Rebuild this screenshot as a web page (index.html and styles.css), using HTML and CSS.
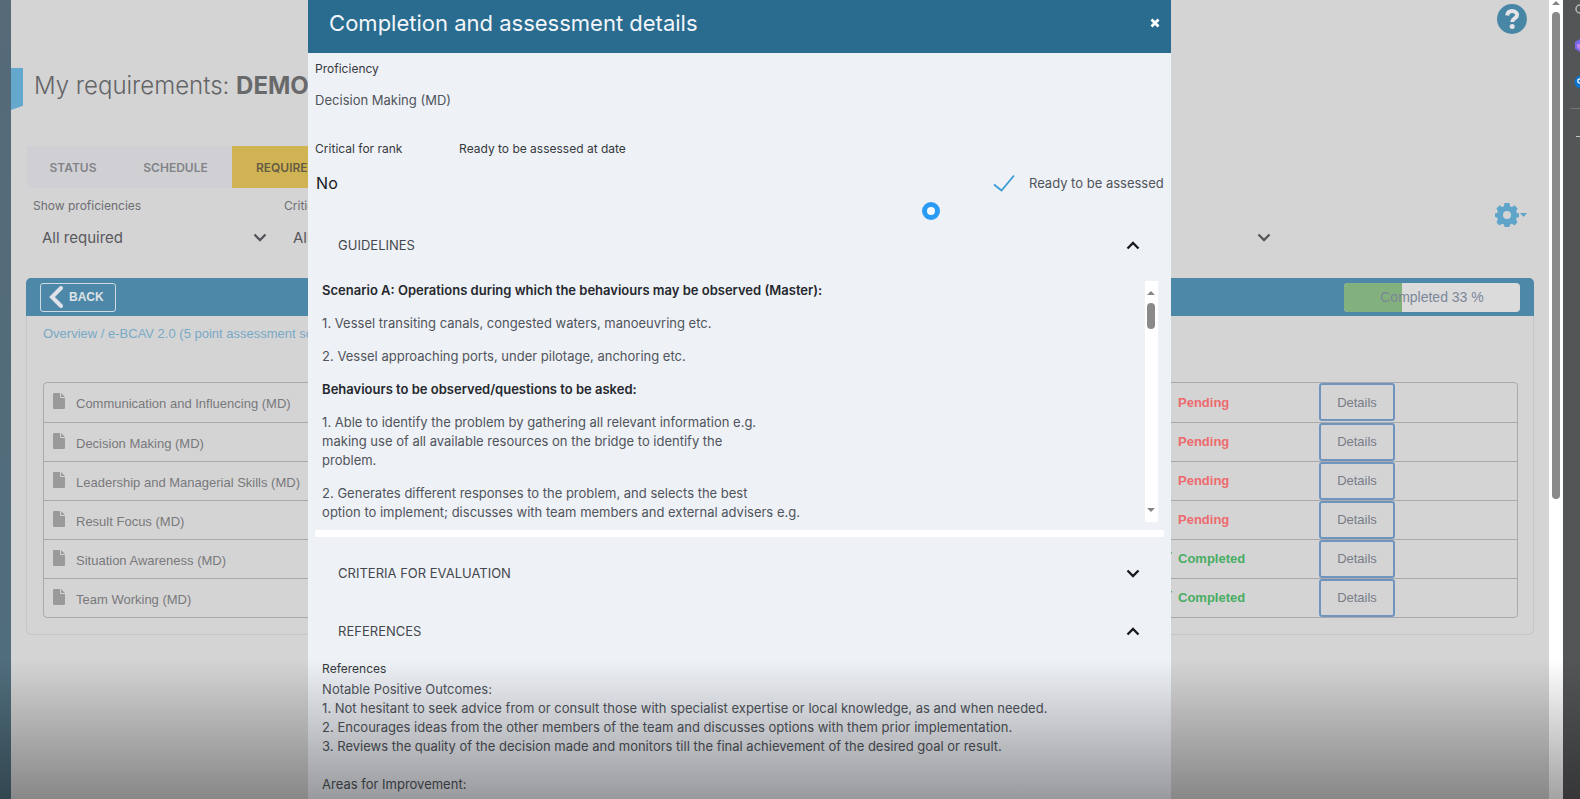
FILE: index.html
```html
<!DOCTYPE html>
<html lang="en">
<head>
<meta charset="utf-8">
<title>My requirements</title>
<link rel="stylesheet" href="styles.css">
</head>
<body>
<svg class="defs" aria-hidden="true">
  <symbol id="down" viewBox="0 0 14 9"><path d="M1.500 1.500L7 7l5.500-5.500" fill="none" stroke="currentColor" stroke-width="2.300"/></symbol>
  <symbol id="file" viewBox="0 0 12 16"><path d="M0 1q0-1 1-1h6v4.200q0 .8.800.8H12v10q0 1-1 1H1q-1 0-1-1zM8 0l4 4H8z" fill="currentColor"/></symbol>
  <symbol id="tick" viewBox="0 0 14 12"><path d="M1 7l4 4L13 1" fill="none" stroke="currentColor" stroke-width="2"/></symbol>
</svg>
<div class="app">
  <div class="rail"></div>
  <main class="page">
    <div class="title-row">
      <span class="flag"></span>
      <h1>My requirements: <b>DEMO</b></h1>
      <button class="help" aria-label="Help"><svg viewBox="0 0 30 30"><circle cx="15" cy="15" r="15" fill="#4787a5"/><path d="M10.200 11.500C10.600 8.300 12.500 7 15 7c2.800 0 5 1.600 5 4.200 0 3.300-4.800 3.300-4.800 6.800" fill="none" stroke="#e4e4e6" stroke-width="4"/><circle cx="15.200" cy="22.600" r="2.500" fill="#e4e4e6"/></svg></button>
    </div>
    <nav class="tabs">
      <button>STATUS</button><button>SCHEDULE</button><button class="active">REQUIREMENTS</button>
    </nav>
    <div class="filters">
      <div class="field"><label for="f1">Show proficiencies</label><div class="pick"><select id="f1"><option>All required</option></select><svg><use href="#down"/></svg></div></div>
      <div class="field"><label for="f2">Critical for rank</label><div class="pick"><select id="f2"><option>All</option></select><svg><use href="#down"/></svg></div></div>
      <div class="field"><label for="f3">Ready</label><div class="pick"><select id="f3"><option>All</option></select><svg><use href="#down"/></svg></div></div>
      <div class="field"><label for="f4">Status</label><div class="pick"><select id="f4"><option>All</option></select><svg><use href="#down"/></svg></div></div>
      <div class="field"><label for="f5">Type</label><div class="pick"><select id="f5"><option>All</option></select><svg><use href="#down"/></svg></div></div>
      <button class="gear" aria-label="Settings"><svg viewBox="0 0 32 24"><g fill="#5fa5ca"><path fill-rule="evenodd" d="M9.500 0h5l.6 3.200 1.800.8 2.700-1.800 3 3.200-1.400 2.800.7 1.700L24 10.400v3.600l-2.300.8-.7 1.800 1.500 2.600-3 3.200-2.700-1.700-1.700.7L14.500 24h-5l-.6-2.600-1.800-.7-2.700 1.700-3-3.200L2.900 16.600l-.7-1.800L0 14v-3.600l2.200-.5.7-1.700L1.400 5.400l3-3.200L7.100 4l1.800-.8zM12 8a4 4 0 100 8 4 4 0 000-8z"/><path d="M25 10h7l-3.500 4z"/></g></svg></button>
    </div>
    <section class="panel">
      <header class="bar">
        <button class="back"><svg viewBox="0 0 14 22"><path d="M12 2L3 11l9 9" fill="none" stroke="currentColor" stroke-width="4" stroke-linecap="round"/></svg>BACK</button>
        <div class="progress"><span class="fill" style="width:33%"></span><span class="value">Completed 33 %</span></div>
      </header>
      <div class="panel-body">
        <a class="crumb" href="#">Overview / e-BCAV 2.0 (5 point assessment scale)</a>
        <div class="frame"><table>
          <tr><td><svg class="file"><use href="#file"/></svg>Communication and Influencing (MD)</td><td class="status pending"><i></i>Pending</td><td class="act"><button>Details</button></td><td class="end"></td></tr>
          <tr><td><svg class="file"><use href="#file"/></svg>Decision Making (MD)</td><td class="status pending"><i></i>Pending</td><td class="act"><button>Details</button></td><td class="end"></td></tr>
          <tr><td><svg class="file"><use href="#file"/></svg>Leadership and Managerial Skills (MD)</td><td class="status pending"><i></i>Pending</td><td class="act"><button>Details</button></td><td class="end"></td></tr>
          <tr><td><svg class="file"><use href="#file"/></svg>Result Focus (MD)</td><td class="status pending"><i></i>Pending</td><td class="act"><button>Details</button></td><td class="end"></td></tr>
          <tr><td><svg class="file"><use href="#file"/></svg>Situation Awareness (MD)</td><td class="status done"><i><svg><use href="#tick"/></svg></i>Completed</td><td class="act"><button>Details</button></td><td class="end"></td></tr>
          <tr><td><svg class="file"><use href="#file"/></svg>Team Working (MD)</td><td class="status done"><i><svg><use href="#tick"/></svg></i>Completed</td><td class="act"><button>Details</button></td><td class="end"></td></tr>
        </table></div>
      </div>
    </section>
  </main>
  <div class="scroll"><span class="up"></span><span class="thumb"></span></div>
  <aside class="side">
    <svg viewBox="0 0 17 150"><circle cx="17" cy="9" r="4" fill="none" stroke="#b9babc" stroke-width="1.500"/><path d="M17 39l-5 3v7l5 3z" fill="#7968e8"/><path d="M17 44h-3v3l3 3z" fill="#c084ee"/><circle cx="18" cy="82" r="6.500" fill="#0a74d0"/><circle cx="17" cy="81" r="2.200" fill="none" stroke="#fff" stroke-width="1.200"/><path d="M7 108.500h10" stroke="#747577"/><path d="M13 136.500h4" stroke="#c6c7c9"/></svg>
  </aside>
</div>

<div class="dialog" role="dialog" aria-labelledby="dlg">
  <header class="dialog-head">
    <h2 id="dlg">Completion and assessment details</h2>
    <button class="close" aria-label="Close"><svg viewBox="0 0 10 10"><path d="M1.500 1.500l7 7m0-7l-7 7" stroke="#fff" stroke-width="2.800"/></svg></button>
  </header>
  <div class="dialog-body">
    <div class="label">Proficiency</div>
    <div class="prof">Decision Making (MD)</div>
    <div class="facts">
      <div class="fact"><div class="label">Critical for rank</div><div class="no">No</div></div>
      <div class="label">Ready to be assessed at date</div>
      <label class="ready"><input type="checkbox" checked><svg viewBox="0 0 22 18"><path d="M1 10.500l7.500 6L21 1.500" fill="none" stroke="#3b9bd6" stroke-width="1.800"/></svg><span>Ready to be assessed</span></label>
    </div>
    <button class="acc">GUIDELINES<svg class="flip"><use href="#down"/></svg></button>
    <div class="guide">
      <div class="guide-text">
        <p><b>Scenario A: Operations during which the behaviours may be observed (Master):</b></p>
        <p>1. Vessel transiting canals, congested waters, manoeuvring etc.</p>
        <p>2. Vessel approaching ports, under pilotage, anchoring etc.</p>
        <p><b>Behaviours to be observed/questions to be asked:</b></p>
        <p>1. Able to identify the problem by gathering all relevant information e.g.<br>making use of all available resources on the bridge to identify the<br>problem.</p>
        <p>2. Generates different responses to the problem, and selects the best<br>option to implement; discusses with team members and external advisers e.g.</p>
      </div>
      <div class="scroll small"><span class="up"></span><span class="thumb"></span><span class="down"></span></div>
    </div>
    <hr>
    <button class="acc">CRITERIA FOR EVALUATION<svg><use href="#down"/></svg></button>
    <button class="acc">REFERENCES<svg class="flip"><use href="#down"/></svg></button>
    <div class="refs">
      <div class="label">References</div>
      <p>Notable Positive Outcomes:<br>1. Not hesitant to seek advice from or consult those with specialist expertise or local knowledge, as and when needed.<br>2. Encourages ideas from the other members of the team and discusses options with them prior implementation.<br>3. Reviews the quality of the decision made and monitors till the final achievement of the desired goal or result.<br><br>Areas for Improvement:</p>
    </div>
  </div>
  <span class="busy"></span>
</div>
<div class="shade"></div>
</body>
</html>
```

FILE: styles.css
```css
* { box-sizing: border-box; }
body {
  margin: 0;
  position: relative;
  height: 100vh;
  overflow: hidden;
  font-family: Inter, "Liberation Sans", sans-serif;
  font-size: 13px;
  color: #50545b;
}
button { font: inherit; color: inherit; background: none; border: 0; padding: 0; }
h1, h2, p { margin: 0; }
.defs { display: none; }

.app { display: grid; grid-template-columns: 11px minmax(0, 1fr) 14px 17px; height: 100%; }
.rail { background: linear-gradient(#566a78, #4f6e7d); }
.page { background: #d5d4d5; }

.title-row { position: relative; display: flex; align-items: flex-start; height: 146px; padding: 68px 23px 0 0; }
.flag { width: 12px; height: 42px; background: #64a8cd; clip-path: polygon(0 0, 100% 0, 100% 90%, 0 100%); }
h1 { margin-left: 11px; font-size: 24px; line-height: 36px; font-weight: 300; color: #636466; white-space: nowrap; }
h1 b { font-weight: 700; color: #68696b; }
.help { position: absolute; top: 4px; right: 22px; width: 30px; height: 30px; }
.help svg, .gear svg { display: block; width: 100%; height: 100%; }

.tabs { display: grid; grid-template-columns: 92px 113px max-content; height: 42px; margin-left: 16px; font-size: 12px; font-weight: 600; color: #828387; }
.tabs button { background: #d0d0d4; }
.tabs button.active { padding: 0 24px; background: #d0b453; color: #655b43; }

.filters { display: grid; grid-template-columns: repeat(5, 235px) 1fr; gap: 16px; padding: 9px 22px 0 22px; height: 90px; }
.field label { display: block; font-size: 12px; line-height: 18px; color: #6d6e71; white-space: nowrap; }
.pick { display: flex; align-items: center; height: 30px; margin-top: 7px; padding: 0 1px 0 9px; }
.pick select { flex: 1; appearance: none; border: 0; padding: 0; background: none; font: inherit; font-size: 15px; color: #58595c; }
.pick svg { width: 14px; height: 9px; color: #55565a; }
.gear { justify-self: end; width: 32px; height: 24px; margin-top: 6px; }

.panel { margin: 0 15px; border: 1px solid #c7c6c7; border-top: 0; border-radius: 6px; font-family: "Liberation Sans", Arial, sans-serif; }
.bar { display: flex; justify-content: space-between; align-items: center; height: 38px; margin: 0 -1px; padding: 0 14px; background: #4d88a8; border-radius: 5px 5px 0 0; }
.back { display: flex; align-items: center; gap: 6px; height: 29px; padding: 0 11px 0 8px; border: 1px solid #cfdbe4; border-radius: 3px; font-size: 12px; font-weight: 700; color: #dfe2e8; }
.back svg { width: 14px; height: 22px; }
.progress { position: relative; width: 176px; height: 29px; overflow: hidden; border-radius: 4px; background: #dbdbdc; text-align: center; line-height: 29px; font-size: 14px; color: #7b8798; }
.fill { position: absolute; top: 0; bottom: 0; left: 0; background: #83b17d; }
.value { position: relative; }
.panel-body { padding: 8px 15px 16px 16px; }
.crumb { display: block; line-height: 20px; margin-bottom: 38px; font-size: 13px; color: #78a9c5; text-decoration: none; }
.frame { border: 1px solid #a9a9ab; border-radius: 4px; }
table { width: 100%; table-layout: fixed; border-collapse: collapse; }
td { height: 39px; padding: 0 0 0 9px; border-bottom: 1px solid #a9a9ab; font-size: 13px; color: #78797b; white-space: nowrap; }
tr:last-child td { border-bottom: 0; }
.file { width: 12px; height: 16px; margin-right: 11px; vertical-align: -1px; color: #9a9a9b; }
td.status { width: 161px; padding: 0 0 0 2px; font-weight: 700; }
td.pending { color: #ed6a6d; }
td.done { color: #47ad62; }
.status i { display: inline-block; width: 20px; height: 12px; }
.status i svg { display: block; width: 15px; height: 12px; }
td.act { width: 78px; padding: 0 0 0 2px; }
.act button { display: block; width: 76px; height: 38px; border: 2px solid #6f95be; border-radius: 3px; color: #777c87; }
td.end { width: 122px; }

.scroll { position: relative; display: flex; flex-direction: column; align-items: center; background: #fff; }
.scroll .up { margin-top: 1px; border: 4px solid transparent; border-top: 0; border-bottom: 4px solid #858585; }
.scroll .down { margin: auto 0 10px; border: 4px solid transparent; border-bottom: 0; border-top: 4px solid #858585; }
.scroll .thumb { width: 8px; height: 61%; margin-top: 7px; border-radius: 4px; background: #8a8a8a; }
.side { background: #545557; }
.side svg { display: block; width: 17px; height: 150px; }

.dialog { position: absolute; top: 0; bottom: 0; left: 19.5%; width: 54.6%; overflow: hidden; background: #eef1f6; }
.dialog-head { display: flex; justify-content: space-between; align-items: center; height: 53px; padding: 0 11px 7px 21px; background: #2a6c8f; }
h2 { font-size: 22px; line-height: 28px; font-weight: 400; color: #f2f6fa; }
.close { width: 10px; height: 10px; }
.close svg { display: block; }
.dialog-body { padding: 7px 7px 0; line-height: 19px; }
.label { font-size: 12px; line-height: 18px; color: #36393e; }
.prof { margin-top: 13px; }
.facts { display: grid; grid-template-columns: 144px 1fr auto; margin-top: 30px; height: 76px; }
.no { margin: 15px 0 0 1px; font-size: 16px; line-height: 20px; color: #17191c; }
.ready { display: flex; align-items: center; gap: 14px; height: 20px; margin-top: 33px; }
.ready input { position: absolute; opacity: 0; }
.ready svg { width: 22px; height: 18px; }
.acc { display: flex; justify-content: space-between; align-items: center; width: 100%; height: 58px; padding: 0 24px 0 23px; color: #44484e; }
.acc svg { width: 14px; height: 9px; color: #17191c; }
.acc .flip { transform: scaleY(-1); }
.guide { display: flex; justify-content: space-between; height: 248px; padding: 7px 6px 0 7px; }
.guide p { margin-bottom: 14px; }
.guide b { font-weight: 600; color: #25282d; }
.guide .small { width: 13px; }
.small .up { margin-top: 10px; }
.small .thumb { height: 26px; margin-top: 8px; }
hr { height: 7px; margin: 8px 0 7px; border: 0; background: #fff; }
.refs { padding: 0 7px; white-space: nowrap; }
.refs .label { margin-bottom: 2px; }
.busy { position: absolute; top: 202px; left: 614px; width: 18px; height: 18px; border: 5px solid #2a9bf4; border-radius: 50%; background: #f8fbff; }
.shade { position: absolute; left: 0; right: 0; bottom: 0; height: 140px; background: linear-gradient(rgba(0, 0, 0, 0), rgba(0, 0, 0, .36)); pointer-events: none; }
```
